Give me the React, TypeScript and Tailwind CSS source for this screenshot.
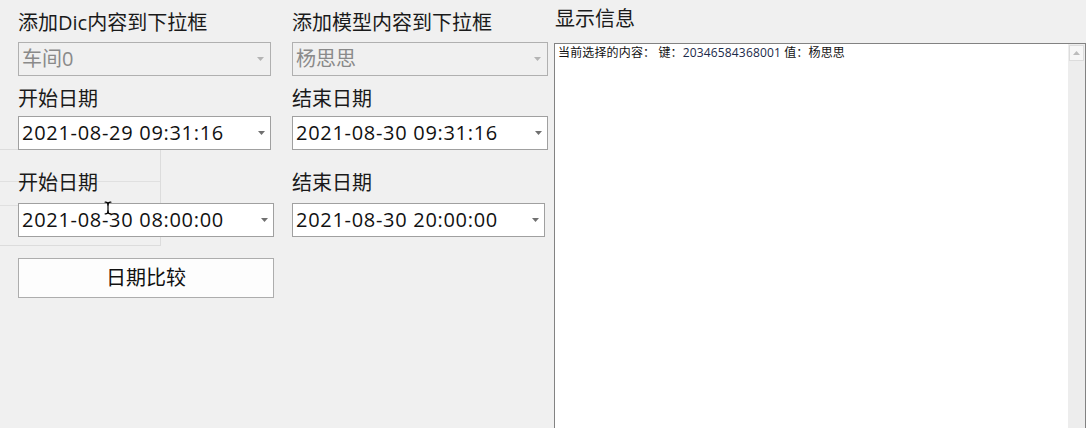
import { TextCursor } from "lucide-react"

const font = { fontFamily: '"Open Sans", "Noto Sans CJK SC", sans-serif' }

function Arrow({ light }: { light?: boolean }) {
  return (
    <svg width="7" height="4" viewBox="0 0 7 4" className="shrink-0">
      <path d="M0 0h7L3.5 4z" fill={light ? "#b4b4b4" : "#707070"} />
    </svg>
  )
}

function Combo({ text, width }: { text: string; width: string }) {
  return (
    <div className={`${width} h-[34px] flex items-center justify-between pl-[3px] pr-[6px] border border-[#b0b0b0] bg-[#f0f0f0] text-[20px] text-[#8a8a8a]`}>
      <span className="leading-none">{text}</span>
      <Arrow light />
    </div>
  )
}

function Picker({ value, width }: { value: string; width: string }) {
  return (
    <div className={`${width} h-[34px] flex items-center justify-between pl-[3px] pr-[5px] border border-[#a0a0a0] bg-white text-[20px] text-[#111]`}>
      <span className="leading-none tracking-[0.7px]">{value}</span>
      <Arrow />
    </div>
  )
}

function Label({ text }: { text: string }) {
  return <div className="h-[26px] leading-[26px] text-[20px] text-[#1a1a1a] whitespace-nowrap">{text}</div>
}

export default function App() {
  return (
    <div className="relative w-[1086px] h-[428px] overflow-hidden bg-[#f0f0f0]" style={font}>
      {/* faint ghost frame left behind */}
      <div className="absolute left-0 top-[149px] w-[161px] h-[97px] border-t border-r border-b border-[#dcdcdc]" />
      <div className="absolute left-0 top-[181px] w-[160px] border-t border-[#e0e0e0]" />
      <div className="absolute left-0 top-[205px] w-[18px] border-t border-[#e0e0e0]" />

      <div className="relative flex">
        {/* column 1 */}
        <div className="ml-[18px] w-[256px] pt-[10px] flex flex-col">
          <Label text="添加Dic内容到下拉框" />
          <div className="mt-[6px]"><Combo text="车间0" width="w-[253px]" /></div>
          <div className="mt-[10px]"><Label text="开始日期" /></div>
          <div className="mt-[4px]"><Picker value="2021-08-29 09:31:16" width="w-[253px]" /></div>
          <div className="mt-[20px]"><Label text="开始日期" /></div>
          <div className="mt-[7px]"><Picker value="2021-08-30 08:00:00" width="w-[256px]" /></div>
          <button className="mt-[21px] w-[256px] h-[40px] border border-[#adadad] bg-[#fdfdfd] text-[20px] text-[#111]">
            日期比较
          </button>
        </div>

        {/* column 2 */}
        <div className="ml-[18px] w-[256px] pt-[10px] flex flex-col">
          <Label text="添加模型内容到下拉框" />
          <div className="mt-[6px]"><Combo text="杨思思" width="w-[256px]" /></div>
          <div className="mt-[10px]"><Label text="结束日期" /></div>
          <div className="mt-[4px]"><Picker value="2021-08-30 09:31:16" width="w-[256px]" /></div>
          <div className="mt-[20px]"><Label text="结束日期" /></div>
          <div className="mt-[7px]"><Picker value="2021-08-30 20:00:00" width="w-[253px]" /></div>
        </div>

        {/* column 3 */}
        <div className="ml-[6px] flex-1 pt-[6px] flex flex-col">
          <div className="pl-px"><Label text="显示信息" /></div>
          <div className="mt-[11px] h-[400px] flex border border-[#828282] bg-white">
            <div className="flex-1 pl-[3px] pt-px text-[12px] leading-[16px] tracking-[0.15px] text-[#111] whitespace-nowrap">
              当前选择的内容： 键：<span className="text-[#1b2a4a]">20346584368001</span> 值：杨思思
            </div>
            <div className="w-[17px] bg-[#ededed] flex flex-col items-center">
              <div className="mt-px w-[15px] h-[16px] border border-[#dcdcdc] bg-[#f6f6f6] flex items-center justify-center">
                <svg width="7" height="4" viewBox="0 0 7 4"><path d="M3.5 0L7 4H0z" fill="#bcbcbc" /></svg>
              </div>
            </div>
          </div>
        </div>
      </div>

      {/* mouse cursor */}
      <TextCursor className="absolute left-[101px] top-[197px] w-[14px] h-[22px] text-black" strokeWidth={2} />
    </div>
  )
}
